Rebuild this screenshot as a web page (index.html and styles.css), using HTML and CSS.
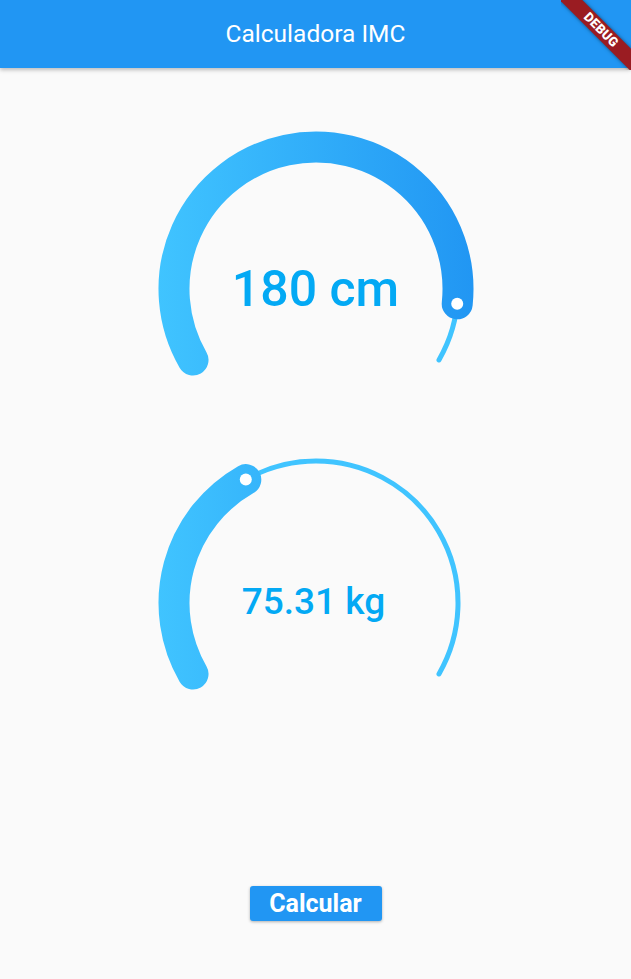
FILE: index.html
```html
<!DOCTYPE html>
<html lang="pt">
<head>
<meta charset="utf-8">
<title>Calculadora IMC</title>
<link rel="stylesheet" href="styles.css">
</head>
<body>
<header class="appbar">
  <h1 class="title">Calculadora IMC</h1>
</header>
<main class="content">
  <div class="gauge">
    <svg class="gauge-svg" width="330" height="300" viewBox="0 0 330 300">
      <defs>
        <linearGradient id="g1" gradientUnits="userSpaceOnUse" x1="7" y1="0" x2="323" y2="0">
          <stop offset="0" stop-color="#40C4FF"/>
          <stop offset="1" stop-color="#2196F3"/>
        </linearGradient>
      </defs>
      <path d="M42.02 229 A142 142 0 1 1 287.98 229" fill="none" stroke="#40C4FF" stroke-width="5" stroke-linecap="round"/>
      <path d="M42.02 229 A142 142 0 1 1 306.22 172.84" fill="none" stroke="url(#g1)" stroke-width="31" stroke-linecap="round"/>
      <circle cx="306.22" cy="172.84" r="6" fill="#ffffff"/>
    </svg>
    <div class="gauge-label big">180 cm</div>
  </div>
  <div class="gauge">
    <svg class="gauge-svg" width="330" height="300" viewBox="0 0 330 300">
      <defs>
        <linearGradient id="g2" gradientUnits="userSpaceOnUse" x1="7" y1="0" x2="323" y2="0">
          <stop offset="0" stop-color="#40C4FF"/>
          <stop offset="1" stop-color="#2196F3"/>
        </linearGradient>
      </defs>
      <path d="M42.02 229 A142 142 0 1 1 287.98 229" fill="none" stroke="#40C4FF" stroke-width="5" stroke-linecap="round"/>
      <path d="M42.02 229 A142 142 0 0 1 94.8 34.6" fill="none" stroke="url(#g2)" stroke-width="31" stroke-linecap="round"/>
      <circle cx="94.8" cy="34.6" r="6" fill="#ffffff"/>
    </svg>
    <div class="gauge-label small">75.31 kg</div>
  </div>
  <button class="calc-btn" type="button">Calcular</button>
</main>
<div class="banner-wrap">
  <div class="banner">DEBUG</div>
</div>
</body>
</html>
```

FILE: styles.css
```css
html, body {
  margin: 0;
  padding: 0;
}
body {
  background: #fafafa;
  font-family: Roboto, "Liberation Sans", sans-serif;
  width: 631px;
  height: 979px;
  overflow: hidden;
}
.appbar {
  height: 68px;
  background: #2196F3;
  display: flex;
  align-items: center;
  justify-content: center;
  box-shadow: 0 2px 4px rgba(0, 0, 0, 0.25);
  position: relative;
  z-index: 1;
}
.title {
  margin: 0;
  color: #ffffff;
  font-size: 24.5px;
  font-weight: 400;
  line-height: 1;
}
.content {
  display: flex;
  flex-direction: column;
  align-items: center;
  padding-top: 63px;
}
.gauge {
  width: 330px;
  display: grid;
  grid-template-columns: 330px;
  grid-template-rows: 300px;
  margin-bottom: 14px;
}
.gauge-svg {
  grid-area: 1 / 1;
  display: block;
  overflow: visible;
}
.gauge-label {
  grid-area: 1 / 1;
  align-self: start;
  height: 316px;
  display: flex;
  align-items: center;
  justify-content: center;
  color: #03A9F4;
  font-weight: 500;
  line-height: 1;
}
.gauge-label.big {
  font-size: 50px;
}
.gauge-label.small {
  font-size: 37px;
  height: 313px;
  padding-right: 4px;
}
.calc-btn {
  margin-top: 127px;
  width: 132px;
  height: 35px;
  border: none;
  border-radius: 3px;
  background: #2196F3;
  color: #ffffff;
  font-family: Roboto, "Liberation Sans", sans-serif;
  font-size: 25px;
  font-weight: 700;
  padding: 0;
  line-height: 1;
  box-shadow: 0 1px 3px rgba(0, 0, 0, 0.3);
}
.banner-wrap {
  position: absolute;
  top: 0;
  right: 0;
  width: 70px;
  height: 70px;
  overflow: hidden;
  z-index: 5;
}
.banner {
  position: absolute;
  left: -20px;
  top: 22px;
  width: 120px;
  height: 16px;
  background: #9a1c22;
  color: #ffffff;
  font-size: 13px;
  font-weight: 900;
  line-height: 16px;
  text-align: center;
  letter-spacing: 0.2px;
  transform: rotate(45deg);
  box-shadow: 0 0 4px rgba(0, 0, 0, 0.5);
}
```
